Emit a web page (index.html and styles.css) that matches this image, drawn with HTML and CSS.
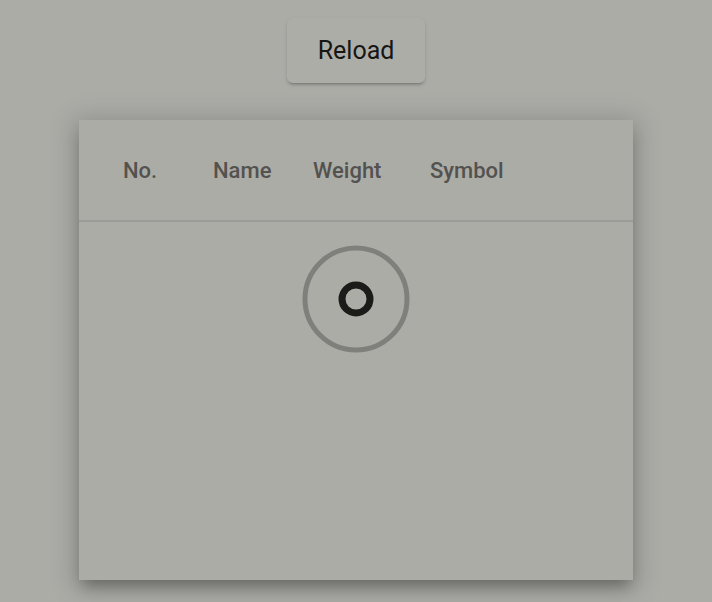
FILE: index.html
```html
<!DOCTYPE html>
<html lang="en">
<head>
    <meta charset="UTF-8">
    <meta name="viewport" content="width=device-width, initial-scale=1.0">
    <title>Elements</title>
    <link rel="stylesheet" href="styles.css">
</head>
<body>
    <div class="page">
        <button class="reload-btn">Reload</button>

        <div class="table-card">
            <div class="table-head">
                <div class="cell col-no">No.</div>
                <div class="cell col-name">Name</div>
                <div class="cell col-weight">Weight</div>
                <div class="cell col-symbol">Symbol</div>
            </div>
            <div class="table-body">
                <svg class="spinner" width="110" height="110" viewBox="0 0 110 110">
                    <circle cx="55" cy="55" r="51" fill="none" stroke="#7f7f7b" stroke-width="5"/>
                    <circle cx="55" cy="55" r="14" fill="none" stroke="#1b1b19" stroke-width="7"/>
                </svg>
            </div>
        </div>
    </div>
</body>
</html>
```

FILE: styles.css
```css
* {
    margin: 0;
    padding: 0;
    box-sizing: border-box;
    font-family: Roboto, 'Noto Sans', sans-serif;
}

body {
    background-color: #acaca7;
    min-height: 100vh;
}

.page {
    display: flex;
    flex-direction: column;
    align-items: center;
    padding-top: 18px;
}

.reload-btn {
    width: 138px;
    height: 65px;
    background-color: #adada8;
    color: #161614;
    border: none;
    border-radius: 6px;
    font-size: 25px;
    font-weight: 400;
    box-shadow: 0 3px 3px -2px rgba(0, 0, 0, 0.25), 0 2px 4px rgba(0, 0, 0, 0.12);
    cursor: pointer;
}

.table-card {
    margin-top: 37px;
    width: 554px;
    height: 460px;
    background-color: #acaca7;
    box-shadow: 0 10px 14px -4px rgba(0, 0, 0, 0.3), 0 4px 24px 6px rgba(0, 0, 0, 0.16);
}

.table-head {
    display: flex;
    align-items: center;
    height: 102px;
    padding-left: 44px;
    border-bottom: 2px solid #9b9b97;
}

.cell {
    font-size: 22px;
    font-weight: 500;
    color: #53524f;
}

.col-no { width: 90px; }
.col-name { width: 100px; }
.col-weight { width: 117px; }

.table-body {
    display: flex;
    justify-content: center;
    padding-top: 22px;
}

.spinner {
    display: block;
}
```
